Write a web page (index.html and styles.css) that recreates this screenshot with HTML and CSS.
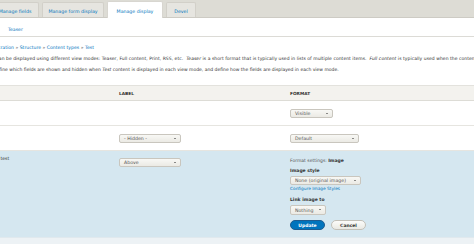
FILE: index.html
```html
<!DOCTYPE html>
<html lang="en">
<head>
    <meta charset="UTF-8">
    <title>Manage display | Test</title>
    <link rel="stylesheet" href="styles.css">
</head>
<body>
    <nav class="tabs">
        <a class="tab tab-fields">Manage fields</a>
        <a class="tab tab-form">Manage form display</a>
        <a class="tab tab-display active">Manage display</a>
        <a class="tab tab-devel">Devel</a>
    </nav>

    <nav class="subtabs">
        <a class="subtab">Teaser</a>
    </nav>

    <div class="content">
        <div class="breadcrumb">
            <a>Home</a> » <a>Administration</a> » <a>Structure</a> » <a>Content types</a> » <a>Test</a>
        </div>

        <p class="help intro">Content items can be displayed using different view modes: Teaser, Full content, Print, RSS, etc.&nbsp; <em>Teaser</em> is a short format that is typically used in lists of multiple content items.&nbsp; <em>Full content</em> is typically used when the content is displayed on its own page.</p>
        <p class="help">Here, you can define which fields are shown and hidden when <em>Test</em> content is displayed in each view mode, and define how the fields are displayed in each view mode.</p>

        <table class="field-display">
            <colgroup>
                <col class="col-field">
                <col class="col-label">
                <col class="col-format">
            </colgroup>
            <thead>
                <tr>
                    <th class="cell-field">Field</th>
                    <th>Label</th>
                    <th>Format</th>
                </tr>
            </thead>
            <tbody>
                <tr class="row">
                    <td class="cell-field"><span class="field-name">Links</span></td>
                    <td></td>
                    <td><span class="select w-visible">Visible</span></td>
                </tr>
                <tr class="row">
                    <td class="cell-field"><span class="field-name">Body</span></td>
                    <td><span class="select w-label">- Hidden -</span></td>
                    <td><span class="select w-default">Default</span></td>
                </tr>
                <tr class="row editing">
                    <td class="cell-field"><span class="field-name">Image test</span></td>
                    <td><span class="select w-label">Above</span></td>
                    <td>
                        <div class="settings-title">Format settings: <strong>Image</strong></div>
                        <div class="form-item">
                            <div class="form-label">Image style</div>
                            <span class="select w-style">None (original image)</span>
                            <a class="config-link">Configure Image Styles</a>
                        </div>
                        <div class="form-item">
                            <div class="form-label">Link image to</div>
                            <span class="select w-link">Nothing</span>
                        </div>
                        <div class="actions">
                            <button class="button primary">Update</button>
                            <button class="button">Cancel</button>
                        </div>
                    </td>
                </tr>
                <tr class="row next">
                    <td class="cell-field"></td>
                    <td></td>
                    <td></td>
                </tr>
            </tbody>
        </table>
    </div>
</body>
</html>
```

FILE: styles.css
```css
body {
    margin: 0;
    width: 474px;
    height: 244px;
    overflow: hidden;
    font-family: 'DejaVu Sans', Verdana, sans-serif;
    font-size: 4.5px;
    color: #333;
    background-color: #fff;
}
a {
    color: #0074bd;
    text-decoration: none;
}

/* primary tabs */
.tabs {
    display: flex;
    gap: 3px;
    height: 16px;
    padding-top: 1px;
    margin-left: -9px;
    background-color: #dddcd5;
    border-bottom: 1px solid #cdcbc4;
    align-items: flex-end;
}
.tab {
    display: flex;
    align-items: center;
    justify-content: center;
    height: 15px;
    padding-top: 3px;
    font-size: 4.7px;
    color: #0074bd;
    background-color: #e6e5e0;
    border: 1px solid #d2d0c9;
    border-bottom: none;
    border-radius: 2px 2px 0 0;
    box-sizing: border-box;
    white-space: nowrap;
}
.tab-fields { width: 48px; }
.tab-form { width: 62px; }
.tab-display { width: 56px; }
.tab-devel { width: 30px; }
.tab.active {
    background-color: #fff;
    height: 17px;
    margin-bottom: -1px;
    border-color: #d8d6d0;
}

/* secondary tabs */
.subtabs {
    display: flex;
    height: 18px;
    align-items: flex-end;
    padding-left: 8px;
    border-bottom: 1px solid #dcdbd6;
}
.subtab {
    font-size: 4.6px;
    line-height: 6px;
    margin-bottom: 3px;
}

/* page content */
.content {
    margin-left: -39px;
}
.breadcrumb {
    font-size: 4.6px;
    line-height: 6px;
    margin-top: 8px;
    white-space: nowrap;
    color: #555;
}
.help {
    margin: 0;
    line-height: 11px;
    white-space: nowrap;
}
.help.intro {
    margin-top: 1.5px;
    text-indent: 1.5px;
    letter-spacing: 0.04px;
}

/* field display table */
.field-display {
    margin-top: 10.5px;
    width: 600px;
    table-layout: fixed;
    border-collapse: collapse;
}
.col-field { width: 151px; }
.col-label { width: 171px; }
.field-display th {
    height: 14px;
    padding: 0 6px;
    text-align: left;
    font-size: 4.3px;
    font-weight: bold;
    text-transform: uppercase;
    color: #333;
    background-color: #f3f2ee;
    border-top: 1px solid #e3e2dd;
    border-bottom: 1px solid #dddcd6;
}
.field-display td {
    padding: 0 6px;
    height: 24px;
    border-bottom: 1px solid #e6e5e0;
}
.field-display .cell-field {
    padding-left: 22px;
}
.field-name {
    color: #333;
}
.row.editing td {
    background-color: #d5e7f0;
    vertical-align: top;
    padding-top: 7px;
    padding-bottom: 7px;
    border-bottom: 1px solid #e0e9ee;
}
.row.editing .cell-field {
    border-left: 2px solid #c3d9e5;
}
.row.editing .field-name {
    display: block;
    margin-top: -2px;
}
.row.next td {
    background-color: #edf2f5;
}

/* fake selects */
.select {
    position: relative;
    display: inline-block;
    height: 9px;
    line-height: 8px;
    padding-left: 4px;
    box-sizing: border-box;
    font-size: 4.7px;
    color: #555;
    background: linear-gradient(#f8f8f5, #ebeae4);
    border: 1px solid #c9c6be;
    border-radius: 2px;
    vertical-align: middle;
    white-space: nowrap;
}
.select::after {
    content: '';
    position: absolute;
    right: 4px;
    top: 3px;
    border-left: 1.3px solid transparent;
    border-right: 1.3px solid transparent;
    border-top: 1.8px solid #222;
}
.w-visible { width: 43px; }
.w-label { width: 62px; }
.w-default { width: 69px; }
.w-style { width: 71px; }
.w-link { width: 36px; height: 10px; line-height: 9px; }

/* formatter settings */
.settings-title {
    line-height: 6px;
    color: #555;
}
.settings-title strong {
    color: #333;
}
.form-item {
    margin-top: 4px;
}
.form-item + .form-item {
    margin-top: 5px;
}
.form-label {
    font-weight: bold;
    line-height: 6px;
    margin-bottom: 1.5px;
}
.config-link {
    display: block;
    margin-top: 1.5px;
    line-height: 6px;
    font-size: 4.3px;
}
.actions {
    display: flex;
    gap: 6px;
    margin-top: 5.5px;
}
.button {
    width: 35px;
    height: 10px;
    padding: 0;
    font-family: inherit;
    font-size: 4.5px;
    font-weight: bold;
    color: #333;
    background: linear-gradient(#fcfcfa, #e9e9e3);
    border: 1px solid #c2c0b8;
    border-radius: 6px;
}
.button.primary {
    color: #fff;
    background: #0074bd;
    border-color: #1e5c90;
}
```
